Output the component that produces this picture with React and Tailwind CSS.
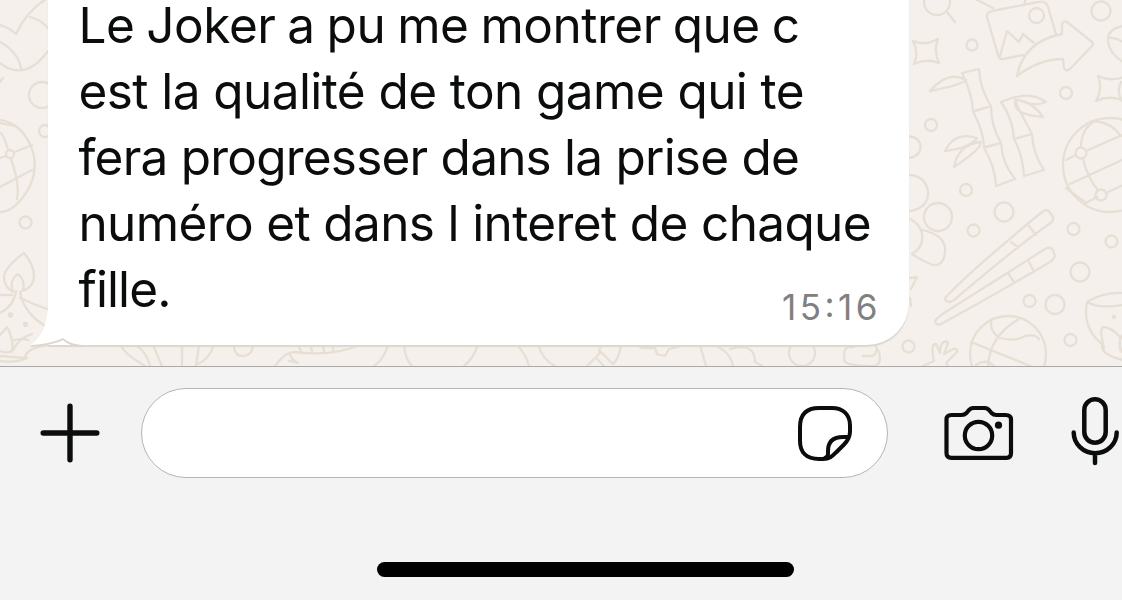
const lines = [
  { text: "Le Joker a pu me montrer que c", cls: "mb-2 leading-[50px] tracking-[-0.48px] [word-spacing:-1.5px]" },
  { text: "est la qualité de ton game qui te", cls: "tracking-[-0.58px]" },
  { text: "fera progresser dans la prise de", cls: "tracking-[-0.78px]" },
  { text: "numéro et dans l interet de chaque", cls: "tracking-[-0.63px]" },
  { text: "fille.", cls: "tracking-[-0.9px]" },
];

const dots = [
  [972, 45, 5.5], [1101, 11, 9.5], [1066, 93, 6], [931, 125, 6], [910, 147, 10.5],
  [966, 190, 6], [1004, 212, 9.5], [938, 217, 14], [973.5, 230.5, 6], [1073.5, 229, 6],
  [1111.5, 241.5, 6], [1080, 272, 9.5], [1055, 304.5, 9.5], [1029.5, 301, 6],
  [1070.5, 340, 6], [908.5, 346.5, 6], [42, 95, 13], [45, 131, 6], [25.5, 222.5, 6],
  [10.5, 315, 1.5], [25.5, 324.5, 1.5], [802, 353, 13],
];

function Wallpaper() {
  return (
    <svg className="absolute inset-0 h-[366px] w-full" viewBox="0 0 1122 366" fill="none" stroke="#e7dfd5" strokeWidth="2.3" strokeLinecap="round" strokeLinejoin="round" aria-hidden="true">
      {dots.map(([x, y, r]) => <circle key={`${x}-${y}`} cx={x} cy={y} r={r} />)}
      {/* magnifier and stars */}
      <circle cx="937" cy="2" r="13" />
      <path d="M947 12l8 10" />
      <path d="M913 41q12 5 25-2q-5 11 1 24q-12-5-25 1q5-12-1-23zM1098 76q12 6 26 1M1096 101q12-6 26-1M1098 76q5 12-2 25M1121 82q-5 9 1 19" />
      {/* photo and arrow */}
      <path d="M975-1l18 9M1024 5l2-7M1023 55l-20 4q-4 1-5-4l-11-38q-1-4 5-6l46-9q8-2 10 5l8 27" />
      <circle cx="1036.500" cy="15.500" r="7.500" />
      <path d="M1000 56l7-25 12 11 4-8 11 9" />
      <path d="M1017 76q7-35 45-42v-9q1-5 5-3l25 20q2 2 0 4l-22 23q-4 3-6-1l-1-9q-24 0-46 17z" />
      <path d="M1123 26q-16 3-15 15q1 12 15 21M1108 38q7-1 15 4" />
      {/* bamboo */}
      <path d="M962 73l17-4q1 20 12 37l-18 5q-1-18-11-38zM973 112l18-6q0 20 10 37l-17 4q-1-18-11-35zM984 148l17-5q1 20 14 36l-19 7q-1-20-12-38zM930 91q18-21 36-11q-5 5-36 11z" />
      <path d="M1001 102l14-5q0 6 8 20l9 17-18 5q-1-20-13-37zM1014 139l18-5q1 20 12 36l-20 6q-1-20-10-37zM1017 97q16-4 29 5-12 5-25-1M1015 100q16 0 28 17-26-2-28-12zM945 151q10-20 32-13q-7 10-32 13zM954 167q4-22 26-25q4 5-26 25z" />
      {/* globe */}
      <circle cx="1110" cy="165" r="47" />
      <circle cx="1081" cy="153" r="5.500" /><circle cx="1101" cy="195" r="5.500" />
      <path d="M1066 160l10-5M1086 151l36-16M1070 184l52-24M1081 147q0-18 14-26q17 2 26 15M1083 159q5 20 15 31M1066 188l20 15 11-6M1106 193l17-8" />
      {/* mushrooms */}
      <path d="M910 175q15 1 18 16q1 17-18 20M910 219q10 5 12 15q2 13-10 20M923 230q24 6 22 22q-1 14-12 13q-11-4-21-11M910 278l7-1-6 12M910 298l1 8" />
      {/* chopsticks */}
      <path d="M945 298q24-26 97-86q4-3 7-1l4 6q1 4-4 7-34 24-95 76l-4 2q-6-1-5-4zM1029 226l7 9M1011 242l7 5M935 321q2-3 9-8l101-64q6-3 8 1l2 6q-1 3-5 6-54 32-109 62-5 2-6-3zM1029 262l5 10M1008 273l6 9" />
      {/* basketball */}
      <circle cx="1008" cy="354" r="38" />
      <path d="M971 342l62 25M991 320q-1 13 9 18q16 4 25-2q10-2 14 3M1019 319q-30 17-31 48M976 365q10-7 18 1" />
      {/* tiny hand */}
      <path d="M923 366l11-5q-4-17 2-17l4 9q0-11 6-12l2 2-4 11 9-5q5-1 4 3l-11 11 2 3" />
      {/* bowl */}
      <path d="M1123 293q-20-1-36 9q-5 26 15 42M1087 302q11 7 36 3M1104 348q-5-19-1-21q8 0 17 10v13M1102 345q-1 10 21 15M1123 334q-6 7-1 18" />
      <circle cx="1114" cy="317" r="1" />
      {/* left side: heart, globe and oil lamp */}
      <path d="M0 25q10 3 16 9q10-22 30-35M30 17q18 5 22 20M0 42q18 10 21 26M48 51q-16 22-33 19Q7 69 0 63M0 82l3-4M0 120q24 4 33 32q7 26-14 50-9 10-19 10M0 123l14 3M0 133q3 0 8 17M15 152l17-7M0 158l6-2M0 187l32-17M11 159q9 25 6 40" />
      <circle cx="10" cy="154" r="4" />
      <path d="M24 253q-20 15-20 24q0 10 9 15M24 253q10 12 10 23q0 11-12 15M13 291q-3-8 1-13q3-6 7-1q5 8 1 14M16 291q-2 15-16 22M20 292q4 22 27 35M20 298q13 6 27 11M0 295h12M0 335l7-8q7 13 5 25M12 341q8-3 16-1M0 351q9 3 13-1 6-12 19-16M0 356l25 2q1-13 38-14M0 361q17 2 27-3" />
      {/* strip under the message */}
      <path d="M145 366q-22-13-24-21h14q11 5 15 21M153 345l9 21M182 345v21M199 345l-3 21M214 345q-4 14-18 20M234 345q0 11 9 11t10-11M275 366q10-14 19-14 40 5 68-8M289 361l9 2q-7-3-8-9M298 345l3 6M310 345l2 6M323 345l1 7M333 345v7" />
      <path d="M388 345q-4 14-14 21M404 345q1 14 8 21M478 345q-5 14-14 21M517 345q9 9 12 21M538 345q5 15 17 21M621 345q-2 14-8 19l-12-12-14 14M601 345l-2 7M597 359l7 7M637 345l5 3h13l2 6 8 2 4-7 9-2M700 345l6 21M712 345q18 5 21 21M730 349q25-7 25 13l7 4M853 347q-12-2-8 15q6 4 24 4q14 2 10-14l-4-7M863 356h9q4-1 4-5" />
    </svg>
  );
}

function Plus() {
  return (
    <svg className="h-[60px] w-[60px]" viewBox="0 0 60 60" stroke="#0b0c0c" strokeWidth="5.400" strokeLinecap="round">
      <path d="M30 3.200v53.600M3.200 30h53.600" />
    </svg>
  );
}

function Sticker() {
  return (
    <svg className="h-[56px] w-[56px]" viewBox="0 0 56 56" fill="none" stroke="#0b0c0c" strokeWidth="4" strokeLinecap="round" strokeLinejoin="round">
      <path d="M22 3h13C46 3 53 9.500 53 20.500v6c0 6-2 9-6 13l-7 7c-5 5-7 7.500-14 7.500h-4C9 54 3 47 3 36V22C3 10 9 3 22 3z" />
      <path d="M51 32h-5c-10 0-15 5-15 14v3q0 3-3 4" />
    </svg>
  );
}

function Camera() {
  return (
    <svg className="relative top-px h-[56px] w-[70px]" viewBox="0 0 70 56" fill="none" stroke="#0b0c0c" strokeWidth="4.200" strokeLinejoin="round">
      <path d="M7.500 9h10q3 0 5-2l2.500-3q2-2 5-2h10q3 0 5 2l2.500 3q2 2 5 2h9Q67 9 67 13.500V47q0 4.800-4.500 4.800h-55Q2.500 51.800 2.500 47V13.500q0-4.500 5-4.500z" />
      <circle cx="34.500" cy="29.500" r="13.700" />
      <circle cx="54.500" cy="19.200" r="3.600" fill="#0b0c0c" stroke="none" />
    </svg>
  );
}

function Mic() {
  return (
    <svg className="relative -top-0.5 h-[70px] w-[50px]" viewBox="0 0 50 70" fill="none" stroke="#0b0c0c" strokeWidth="4.500" strokeLinecap="round">
      <rect x="14.300" y="3.200" width="21.400" height="43.500" rx="10.700" />
      <path d="M3.700 36.500a21.300 20.500 0 0 0 43 0M25 58v9" />
    </svg>
  );
}

export default function App() {
  return (
    <main className="flex h-[600px] w-[1122px] flex-col overflow-hidden bg-[#f3f3f3] font-['Inter',sans-serif]">
      <section className="relative h-[366px] shrink-0 bg-[#f5f0eb] pl-12">
        <Wallpaper />
        <article className="relative h-[345px] w-[861px] rounded-br-[42px] bg-white pl-[30.5px] shadow-[0_2px_1px_#dcd7ce]">
          <svg className="absolute bottom-[-3px] left-[-19px] h-[48px] w-[62px]" viewBox="0 0 62 48" aria-hidden="true">
            <path d="M2 46q22-2 32-7 8 7 20 7" fill="none" stroke="#dcd7ce" strokeWidth="2" />
            <path d="M19 0v9C17 27 12 38 1 45q20-1 33-7 9 7 27 7V0z" fill="white" />
          </svg>
          <div className="relative flex flex-col text-[49.5px] leading-[66px] text-[#0b0c0c]">
            {lines.map(({ text, cls }) => (
              <p key={text} className={`whitespace-nowrap ${cls}`}>{text}</p>
            ))}
          </div>
          <time className="absolute right-[28px] bottom-[18px] text-[35px] leading-10 tracking-[3.5px] text-[#808080]">15<span className="relative -top-[3px]">:</span>16</time>
        </article>
      </section>
      <footer className="flex h-[234px] flex-col border-t border-[#aaa9a8] bg-[#f3f3f3]">
        <div className="flex h-[132px] items-center pl-10">
          <button aria-label="Ajouter" className="flex"><Plus /></button>
          <div className="ml-[41px] flex h-[90px] w-[747px] items-center justify-end rounded-full border border-[#b5b5b5] bg-white pr-[34px]"><Sticker /></div>
          <button aria-label="Appareil photo" className="ml-[56px] flex"><Camera /></button>
          <button aria-label="Micro" className="ml-[56px] flex shrink-0"><Mic /></button>
        </div>
        <div className="mt-[63px] ml-[377px] h-[15px] w-[417px] rounded-full bg-black" />
      </footer>
    </main>
  );
}
